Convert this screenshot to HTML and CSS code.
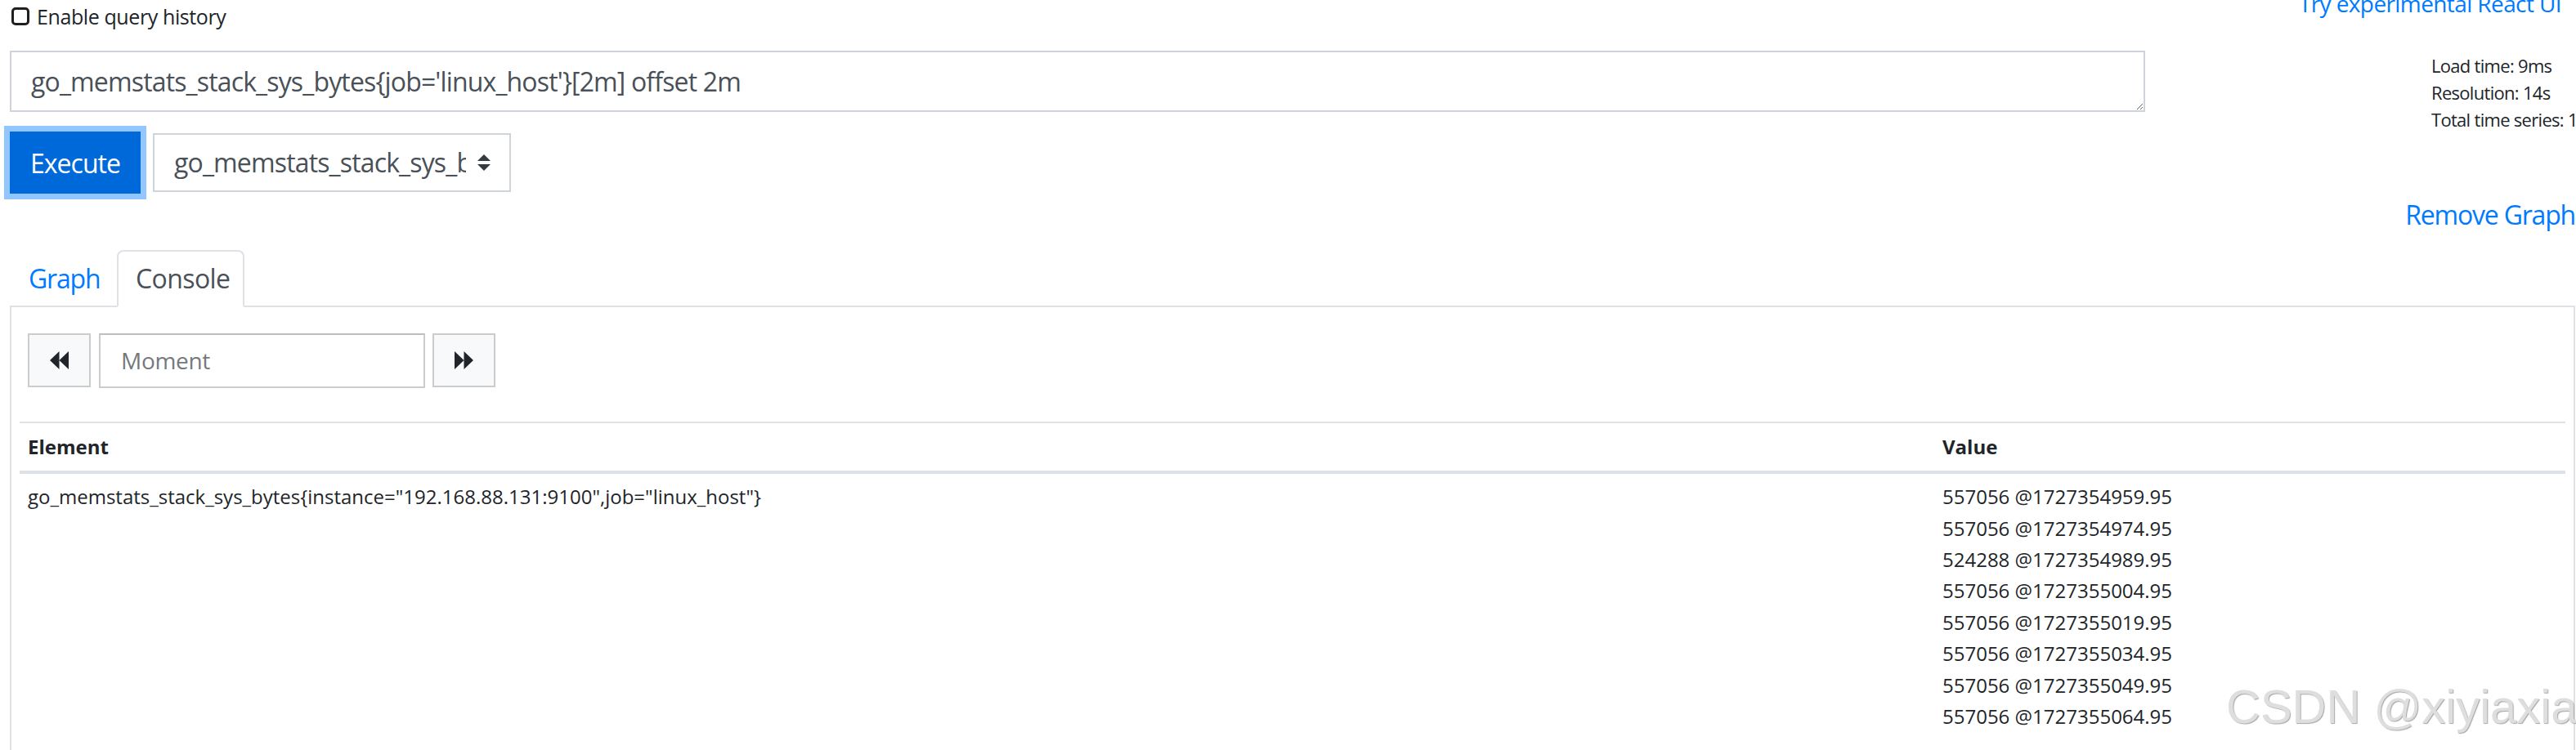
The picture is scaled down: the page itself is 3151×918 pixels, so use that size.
FILE: index.html
```html
<!DOCTYPE html>
<html lang="en">
<head>
<meta charset="utf-8">
<title>Prometheus Time Series Collection and Processing Server</title>
<link rel="stylesheet" href="styles.css">
</head>
<body>
<div class="page">
  <div class="top-row">
    <label class="history"><span class="checkbox"></span><span class="history-text">Enable query history</span></label>
    <a class="react-link" href="#">Try experimental React UI</a>
  </div>

  <div class="query-grid">
    <div class="query-left">
      <textarea class="expr" rows="1">go_memstats_stack_sys_bytes{job='linux_host'}[2m] offset 2m</textarea>
      <div class="exec-row">
        <button class="execute" type="button">Execute</button>
        <div class="metric-select">
          <span class="metric-text">go_memstats_stack_sys_bytes</span>
          <svg class="updown" width="16" height="20" viewBox="0 0 4 5"><path d="M2 0L0 2h4zm0 5L0 3h4z" fill="#343a40"/></svg>
        </div>
      </div>
    </div>
    <div class="stats">
      <div>Load time: 9ms</div>
      <div>Resolution: 14s</div>
      <div>Total time series: 1</div>
    </div>
  </div>

  <div class="remove-row"><a href="#">Remove Graph</a></div>

  <ul class="tabs">
    <li class="tab tab-graph"><a href="#">Graph</a></li>
    <li class="tab tab-console active"><a href="#">Console</a></li>
  </ul>

  <div class="panel">
    <div class="controls">
      <button class="step" type="button">
        <svg width="23" height="22" viewBox="0 0 23 22"><path d="M0 11L11.5 0V22Z M11.5 11L23 0V22Z" fill="#212529"/></svg>
      </button>
      <input class="moment" type="text" placeholder="Moment">
      <button class="step" type="button">
        <svg width="23" height="22" viewBox="0 0 23 22"><path d="M23 11L11.5 0V22Z M11.5 11L0 0V22Z" fill="#212529"/></svg>
      </button>
    </div>

    <table class="console">
      <colgroup><col class="col-element"><col></colgroup>
      <thead>
        <tr><th>Element</th><th>Value</th></tr>
      </thead>
      <tbody>
        <tr>
          <td>go_memstats_stack_sys_bytes{instance="192.168.88.131:9100",job="linux_host"}</td>
          <td>557056 @1727354959.95<br>557056 @1727354974.95<br>524288 @1727354989.95<br>557056 @1727355004.95<br>557056 @1727355019.95<br>557056 @1727355034.95<br>557056 @1727355049.95<br>557056 @1727355064.95</td>
        </tr>
      </tbody>
    </table>
  </div>
</div>
<div class="watermark">CSDN @xiyiaxia</div>
</body>
</html>
```

FILE: styles.css
```css
html, body {
  margin: 0;
  padding: 0;
}
body {
  width: 3151px;
  height: 918px;
  overflow: hidden;
  position: relative;
  background: #fff;
  color: #212529;
  font-family: "Open Sans", "Noto Sans", sans-serif;
  font-size: 32px;
  line-height: 48px;
}
a {
  color: #007bff;
  text-decoration: none;
}
.page {
  padding: 0 1px 0 12px;
}

/* top row */
.top-row {
  display: flex;
  justify-content: space-between;
  align-items: flex-start;
  height: 40px;
  margin-bottom: 22px;
}
.history {
  display: flex;
  align-items: center;
  height: 40px;
  padding-left: 2px;
  font-size: 25px;
  line-height: 40px;
  letter-spacing: -0.4px;
}
.checkbox {
  width: 22px;
  height: 22px;
  box-sizing: border-box;
  border: 3px solid #1f1f1f;
  border-radius: 5px;
  margin-right: 9px;
}
.react-link {
  font-size: 28px;
  line-height: 42px;
  letter-spacing: -0.6px;
  margin-top: -17px;
  margin-right: 17px;
}

/* query area */
.query-grid {
  display: flex;
}
.query-left {
  width: 2612px;
}
.expr {
  display: block;
  width: 2612px;
  height: 75px;
  box-sizing: border-box;
  margin: 0;
  padding: 12px 24px;
  border: 2px solid #ced4da;
  border-radius: 0;
  font-family: "Open Sans", "Noto Sans", sans-serif;
  font-size: 32px;
  line-height: 48px;
  letter-spacing: -0.85px;
  color: #495057;
  resize: vertical;
  overflow: hidden;
}
.exec-row {
  display: flex;
  align-items: center;
  gap: 15px;
  margin-top: 24px;
}
.execute {
  width: 160px;
  height: 76px;
  border: 0;
  margin: 0;
  padding: 0;
  background: #0069d9;
  color: #fff;
  font-family: "Open Sans", "Noto Sans", sans-serif;
  font-size: 32px;
  letter-spacing: -1px;
  box-shadow: 0 0 0 7px #92c6fe;
}
.metric-select {
  display: flex;
  align-items: center;
  width: 438px;
  height: 72px;
  box-sizing: border-box;
  border: 2px solid #ced4da;
  padding: 0 23px 0 24px;
  color: #495057;
}
.metric-text {
  width: 358px;
  overflow: hidden;
  white-space: nowrap;
  letter-spacing: -0.85px;
  margin-right: 14px;
}
.updown {
  flex: none;
}
.stats {
  margin-left: 350px;
  padding-top: 2px;
  font-size: 22px;
  line-height: 33px;
  letter-spacing: -0.7px;
  white-space: nowrap;
}

.remove-row {
  margin-top: 2px;
  text-align: right;
  white-space: nowrap;
  letter-spacing: -1.2px;
}

/* tabs */
.tabs {
  display: flex;
  list-style: none;
  margin: 19px 0 0 0;
  padding: 0;
  border-bottom: 2px solid #dee2e6;
}
.tab {
  margin-bottom: -2px;
  box-sizing: border-box;
  border: 2px solid transparent;
  border-radius: 8px 8px 0 0;
  padding: 9px 0 9px 21px;
}
.tab-graph {
  width: 131px;
  letter-spacing: -1.2px;
}
.tab-console {
  width: 156px;
  letter-spacing: -0.6px;
}
.tab.active {
  border-color: #dee2e6 #dee2e6 #fff;
  background: #fff;
}
.tab.active a {
  color: #495057;
}

/* panel */
.panel {
  border: 2px solid #dee2e6;
  border-top: 0;
  padding: 10px;
  height: 700px;
}
.controls {
  display: flex;
  align-items: center;
  margin: 22px 10px 42px;
  height: 66px;
}
.step {
  width: 77px;
  height: 66px;
  box-sizing: border-box;
  margin: 0;
  padding: 0;
  border: 2px solid #cccccc;
  background: #f8f9fa;
  display: flex;
  align-items: center;
  justify-content: center;
}
.moment {
  width: 399px;
  height: 67px;
  box-sizing: border-box;
  margin: 0 9px 0 10px;
  padding: 0 0 0 25px;
  border: 2px solid #cccccc;
  border-top-color: #bdbdbd;
  font-family: "Open Sans", "Noto Sans", sans-serif;
  font-size: 28px;
  letter-spacing: -0.3px;
  color: #495057;
  outline: none;
}
.moment::placeholder {
  color: #75797d;
}

.console {
  width: 100%;
  border-collapse: collapse;
  font-size: 24px;
  line-height: 38.4px;
}
.col-element {
  width: 2342px;
}
.console th {
  text-align: left;
  font-weight: 700;
  padding: 9.6px 10px;
  border-top: 2px solid #dee2e6;
  border-bottom: 4px solid #dee2e6;
}
.console td {
  padding: 9.6px 10px;
  vertical-align: top;
}

.watermark {
  position: absolute;
  left: 2723px;
  top: 830px;
  font-family: "Liberation Sans", Arial, sans-serif;
  font-size: 58px;
  line-height: 70px;
  color: #dedede;
  text-shadow: 1px 1px 1px #a8a8a8;
  white-space: nowrap;
}
```
